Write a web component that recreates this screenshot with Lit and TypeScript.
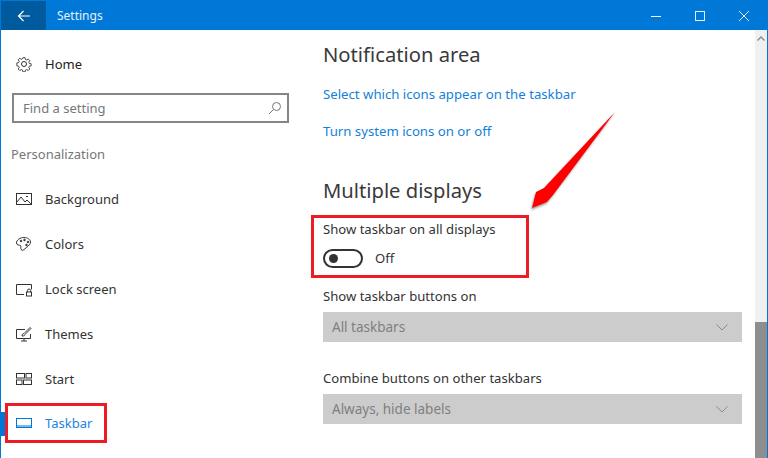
import { LitElement, html, css, svg } from "lit";
import { customElement } from "lit/decorators.js";

const ic = (body: unknown) => html`<svg class="ic" viewBox="0 0 16 16" width="16" height="16" fill="none" stroke="#333" stroke-width="1">${body}</svg>`;

const icons: Record<string, unknown> = {
  Background: ic(svg`<rect x="0.5" y="2.5" width="15" height="11"/><path d="M1 11l4-5 4 5 2-2 4 4"/><path d="M10 5.5h2"/>`),
  Colors: ic(svg`<path d="M8 1.5c-4 0-7.5 2.5-7.5 5.5 0 2.500 3 2 4 2.500s-.5 2.500 1 4.500c1.500 1 3-1 5-2.500 2.500-2 4-3.500 4-5.500 0-2.500-3-4.500-6.500-4.500z"/><circle cx="5" cy="5" r=".8" fill="#333"/><circle cx="8.500" cy="4" r=".8" fill="#333"/><circle cx="12" cy="6" r=".8" fill="#333"/><circle cx="10.500" cy="9" r=".8" fill="#333"/>`),
  "Lock screen": ic(svg`<path d="M8 13.500H.5v-10h15v5"/><rect x="10.500" y="11" width="5" height="4"/><path d="M11.500 11V9.500a1.500 1.500 0 0 1 3 0V11"/>`),
  Themes: ic(svg`<path d="M9 3.500H.5v9h14V8"/><path d="M5 15h6M8 12.500V15"/><path d="M6 10c0-2 1-2.500 2-2.500L14 1.500l1 1-6 6c0 1-1 1.500-3 1.500z"/>`),
  Start: ic(svg`<rect x="0.500" y="2.500" width="8" height="4.500"/><rect x="10" y="2.500" width="5.500" height="4.500"/><rect x="0.500" y="9" width="5.500" height="4.500"/><rect x="7.500" y="9" width="8" height="4.500"/>`),
  Taskbar: html`<svg class="ic" viewBox="0 0 16 16" width="16" height="16" fill="none" stroke="#0078d7" stroke-width="1"><rect x="0.500" y="3.500" width="15" height="9"/><rect x="1" y="10" width="14" height="2" fill="#7db8ea" stroke="none"/></svg>`,
};

const nav = ["Background", "Colors", "Lock screen", "Themes", "Start", "Taskbar"];

@customElement("app-root")
export class AppRoot extends LitElement {
  static styles = css`
    :host {
      display: block;
      position: relative;
      width: 768px;
      height: 458px;
      overflow: hidden;
      background: #fff;
      font-family: "Noto Sans", "Open Sans", sans-serif;
      font-size: 13px;
      color: #333;
    }
    .window {
      height: 458px;
      box-sizing: border-box;
      border: 1px solid #0078d7;
      border-bottom: 0;
      border-left-width: 1.500px;
      display: flex;
      flex-direction: column;
    }
    .titlebar {
      height: 29px;
      flex: none;
      background: #0078d7;
      color: #fff;
      display: flex;
      align-items: center;
      font-size: 12px;
    }
    .back {
      width: 45px;
      height: 29px;
      background: #005a9e;
      display: flex;
      align-items: center;
      justify-content: center;
    }
    .title { margin-left: 11px; flex: 1; color: #e6f1fb; }
    .wc {
      width: 44px;
      height: 29px;
      display: flex;
      align-items: center;
      justify-content: center;
    }
    .wc.last { margin-right: 1px; }
    .body { flex: 1; display: flex; min-height: 0; }
    .side { width: 300px; flex: none; padding-top: 19px; box-sizing: border-box; }
    .row {
      height: 44.800px;
      display: flex;
      align-items: center;
      padding-left: 15px;
      gap: 13px;
      box-sizing: border-box;
    }
    .row.home { height: 30px; color: #222; }
    .ic { flex: none; }
    .search {
      margin: 14px 0 0 11px;
      width: 277px;
      height: 30px;
      box-sizing: border-box;
      border: 2px solid #858585;
      display: flex;
      align-items: center;
      justify-content: space-between;
      padding: 0 5px 0 9px;
      color: #777;
    }
    .group { margin: 16px 0 8px 10px; height: 30px; line-height: 30px; color: #767676; font-size: 13px; }
    .row.active { color: #1a86dc; position: relative; }
    .row.active::before {
      content: "";
      position: absolute;
      left: 0;
      top: 11px;
      width: 5px;
      height: 24px;
      background: #0078d7;
    }
    .main { flex: 1; padding-left: 22px; display: flex; flex-direction: column; align-items: flex-start; }
    h2 {
      margin: 0;
      font-weight: 400;
      font-size: 20.200px;
      line-height: 30px;
      color: #3a3a3a;
    }
    .h1 { margin-top: 9px; }
    .h2 { margin-top: 34px; }
    a { color: #1481d8; text-decoration: none; font-size: 13.200px; line-height: 20px; }
    .l1 { margin-top: 15px; }
    .l2 { margin-top: 17px; }
    .label { font-size: 13.100px; line-height: 20px; color: #333; }
    .l3 { margin-top: 14px; }
    .toggle-row { display: flex; align-items: center; gap: 12px; margin-top: 9px; height: 20px; }
    .toggle {
      width: 40px;
      height: 19px;
      box-sizing: border-box;
      border: 2px solid #333;
      border-radius: 10px;
      display: flex;
      align-items: center;
      padding-left: 4px;
    }
    .knob { width: 9px; height: 9px; border-radius: 50%; background: #333; }
    .l4 { margin-top: 18px; }
    .l5 { margin-top: 26px; }
    .select {
      width: 419px;
      height: 30px;
      margin-top: 6px;
      background: #ccc;
      box-sizing: border-box;
      display: flex;
      align-items: center;
      justify-content: space-between;
      padding: 0 14px 0 9px;
      color: #7f7f7f;
      font-size: 13.500px;
    }
    .scroll {
      width: 12px;
      flex: none;
      background: #f0f0f0;
      display: flex;
      flex-direction: column;
      justify-content: space-between;
    }
    .up { height: 16px; display: flex; align-items: center; justify-content: center; }
    .thumb { height: 136px; background: #8e8e8e; }
    .box { position: absolute; border: 3px solid #ed1c24; box-sizing: border-box; }
    .b1 { left: 5px; top: 403px; width: 102px; height: 40px; }
    .b2 { left: 311px; top: 215px; width: 218px; height: 63px; }
    .arrow { position: absolute; left: 525px; top: 108px; filter: drop-shadow(-1px 2px 1px rgba(0, 0, 0, 0.4)); }
  `;

  render() {
    return html`
      <div class="window">
        <div class="titlebar">
          <div class="back">
            <svg width="14" height="12" viewBox="0 0 14 12" fill="none" stroke="#fff" stroke-width="1.200"><path d="M13 6H1.500M6.500 1l-5 5 5 5"/></svg>
          </div>
          <div class="title">Settings</div>
          <div class="wc"><svg width="10" height="10" viewBox="0 0 10 10" stroke="#fff" stroke-width="1"><path d="M0 5.500h10"/></svg></div>
          <div class="wc"><svg width="10" height="10" viewBox="0 0 10 10" fill="none" stroke="#e6f1fb" stroke-width="1"><rect x=".5" y=".5" width="9" height="9"/></svg></div>
          <div class="wc last"><svg width="10" height="10" viewBox="0 0 10 10" fill="none" stroke="#e6f1fb" stroke-width="1"><path d="M0 0l10 10M10 0L0 10"/></svg></div>
        </div>
        <div class="body">
          <div class="side">
            <div class="row home">
              <svg class="ic" viewBox="0 0 16 16" width="16" height="16" fill="none" stroke="#333" stroke-width="1"><circle cx="8" cy="8" r="2.500"/><path d="M6.800 1h2.400l.4 2 1.300.6 1.800-1.100 1.700 1.700-1.100 1.800.6 1.300 2 .4v2.400l-2 .4-.6 1.300 1.100 1.800-1.700 1.700-1.800-1.100-1.300.6-.4 2H6.800l-.4-2-1.300-.6-1.800 1.100-1.700-1.700 1.100-1.800-.6-1.300-2-.4V6.800l2-.4.6-1.300-1.100-1.800 1.700-1.700 1.800 1.100 1.300-.6z" transform="translate(.8 .8) scale(.9)"/></svg>
              <span>Home</span>
            </div>
            <div class="search">
              <span>Find a setting</span>
              <svg width="14" height="14" viewBox="0 0 14 14" fill="none" stroke="#777" stroke-width="1"><circle cx="8.500" cy="5.500" r="4"/><path d="M5.500 8.500L1 13"/></svg>
            </div>
            <div class="group">Personalization</div>
            ${nav.map(
              (n) => html`<div class="row ${n === "Taskbar" ? "active" : ""}">${icons[n]}<span>${n}</span></div>`
            )}
          </div>
          <div class="main">
            <h2 class="h1">Notification area</h2>
            <a class="l1">Select which icons appear on the taskbar</a>
            <a class="l2">Turn system icons on or off</a>
            <h2 class="h2">Multiple displays</h2>
            <div class="label l3">Show taskbar on all displays</div>
            <div class="toggle-row label">
              <div class="toggle"><div class="knob"></div></div>
              <span>Off</span>
            </div>
            <div class="label l4">Show taskbar buttons on</div>
            <div class="select">
              <span>All taskbars</span>
              <svg width="12" height="7" viewBox="0 0 12 7" fill="none" stroke="#8a8a8a" stroke-width="1"><path d="M.5.500L6 6l5.500-5.500"/></svg>
            </div>
            <div class="label l5">Combine buttons on other taskbars</div>
            <div class="select">
              <span>Always, hide labels</span>
              <svg width="12" height="7" viewBox="0 0 12 7" fill="none" stroke="#8a8a8a" stroke-width="1"><path d="M.5.500L6 6l5.500-5.500"/></svg>
            </div>
          </div>
          <div class="scroll">
            <div class="up"><svg width="8" height="5" viewBox="0 0 8 5" fill="none" stroke="#888" stroke-width="1.300"><path d="M.5 4.500L4 1l3.500 3.500"/></svg></div>
            <div class="thumb"></div>
          </div>
        </div>
      </div>
      <div class="box b1"></div>
      <div class="box b2"></div>
      <svg class="arrow" width="95" height="105" viewBox="0 0 95 105">
        <path d="M90 4L19 80l-8 4-4 16 15-6 6-7z" fill="#f00"/>
      </svg>
    `;
  }
}
